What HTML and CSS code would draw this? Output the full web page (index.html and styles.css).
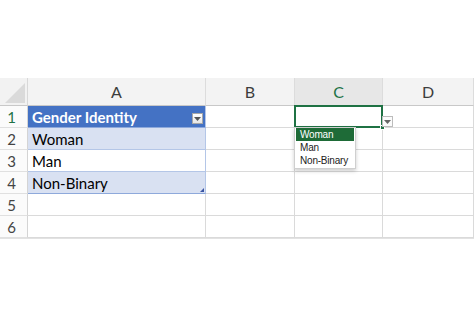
FILE: index.html
```html
<!DOCTYPE html>
<html>
<head>
<meta charset="utf-8">
<link rel="stylesheet" href="styles.css">
</head>
<body>
<div class="page">
  <div class="sheet">
    <div class="corner"><svg class="corner-tri" width="28" height="28" viewBox="0 0 28 28"><polygon points="5,25 25,25 25,5" fill="#dadada"/></svg></div>
    <div class="colhead">A</div>
    <div class="colhead">B</div>
    <div class="colhead active">C</div>
    <div class="colhead">D</div>

    <div class="rowhead active">1</div>
    <div class="cell t-head">Gender Identity<span class="filter"><svg width="7" height="4" viewBox="0 0 7 4"><polygon points="0,0 7,0 3.5,4" fill="#555"/></svg></span></div>
    <div class="cell"></div>
    <div class="cell sel">
      <span class="sel-handle"></span>
      <span class="dd-btn"><svg width="7" height="4" viewBox="0 0 7 4"><polygon points="0,0 7,0 3.5,4" fill="#666"/></svg></span>
      <div class="dd-list">
        <div class="dd-item on">Woman</div>
        <div class="dd-item">Man</div>
        <div class="dd-item">Non-Binary</div>
      </div>
    </div>
    <div class="cell"></div>

    <div class="rowhead">2</div>
    <div class="cell t-band">Woman</div>
    <div class="cell"></div>
    <div class="cell"></div>
    <div class="cell"></div>

    <div class="rowhead">3</div>
    <div class="cell t-plain">Man</div>
    <div class="cell"></div>
    <div class="cell"></div>
    <div class="cell"></div>

    <div class="rowhead">4</div>
    <div class="cell t-band t-last">Non-Binary<span class="resize"></span></div>
    <div class="cell"></div>
    <div class="cell"></div>
    <div class="cell"></div>

    <div class="rowhead">5</div>
    <div class="cell"></div>
    <div class="cell"></div>
    <div class="cell"></div>
    <div class="cell"></div>

    <div class="rowhead">6</div>
    <div class="cell"></div>
    <div class="cell"></div>
    <div class="cell"></div>
    <div class="cell"></div>
  </div>
</div>
</body>
</html>
```

FILE: styles.css
```css
* { box-sizing: border-box; }
html, body { margin: 0; padding: 0; background: #ffffff; }
body { width: 474px; height: 315px; overflow: hidden; font-family: Lato, "Open Sans", "Liberation Sans", sans-serif; }

.page { padding-top: 78px; }

.sheet {
  display: grid;
  grid-template-columns: 28px 178px 89px 88px 91px;
  grid-template-rows: 28px repeat(6, 22px);
  width: 474px;
  border-bottom: 1px solid #e2e2e2;
}

.corner {
  background: #f2f2f2;
  border-right: 1px solid #d8d8d8;
  border-bottom: 1px solid #c8c8c8;
  position: relative;
}
.corner-tri { display: block; }

.colhead {
  background: #f3f3f3;
  border-right: 1px solid #dcdcdc;
  border-bottom: 1px solid #c8c8c8;
  display: flex;
  align-items: center;
  justify-content: center;
  font-size: 16px;
  color: #3d3d3d;
}
.colhead.active { background: #e7e7e7; color: #217346; }

.rowhead {
  background: #fbfbfb;
  border-right: 1px solid #d4d4d4;
  border-bottom: 1px solid #e0e0e0;
  display: flex;
  align-items: center;
  justify-content: center;
  font-size: 15px;
  color: #444;
  padding-right: 4px;
}
.rowhead.active { color: #217346; }

.cell {
  border-right: 1px solid #dadada;
  border-bottom: 1px solid #dadada;
  display: flex;
  align-items: center;
  padding-left: 4px;
  font-size: 15px;
  color: #000;
  position: relative;
}

.t-head {
  background: #4472c4;
  color: #fff;
  font-weight: bold;
  border-right: 1px solid #b4c6e7;
  border-bottom: 1px solid #8ea9db;
}
.t-band {
  background: #d9e1f2;
  border-right: 1px solid #b4c6e7;
  border-bottom: 1px solid #b4c6e7;
}
.t-plain {
  background: #ffffff;
  border-right: 1px solid #b4c6e7;
  border-bottom: 1px solid #b4c6e7;
}
.t-last { border-bottom: 1px solid #8ea9db; }

.filter {
  position: absolute;
  right: 2px;
  top: 7px;
  width: 11px;
  height: 11px;
  background: linear-gradient(#ffffff, #e6e6e6);
  border: 1px solid #a8a8a8;
  display: flex;
  align-items: center;
  justify-content: center;
}

.resize {
  position: absolute;
  right: 1px;
  bottom: 1px;
  width: 0;
  height: 0;
  border-left: 4px solid transparent;
  border-bottom: 4px solid #3a55a4;
}

.sel {
  border: 2px solid #1f7244;
  margin: -1px 0 0 -1px;
  width: calc(100% + 1px);
  height: calc(100% + 1px);
  z-index: 2;
}
.sel-handle {
  position: absolute;
  right: -4px;
  bottom: -4px;
  width: 5px;
  height: 5px;
  background: #1f7244;
  border: 1px solid #fff;
}

.dd-btn {
  position: absolute;
  left: calc(100% + 1px);
  top: 9px;
  width: 11px;
  height: 11px;
  background: #fbfbfb;
  border: 1px solid #bcbcbc;
  display: flex;
  align-items: center;
  justify-content: center;
}

.dd-list {
  position: absolute;
  left: -2px;
  top: calc(100% + 1px);
  width: 62px;
  background: #fff;
  border: 1px solid #cfcfcf;
  box-shadow: 0 2px 4px rgba(0,0,0,0.2);
  padding: 0 0 1px 0;
  z-index: 3;
}
.dd-item {
  font-family: "Liberation Sans", Arial, sans-serif;
  font-size: 10px;
  line-height: 13px;
  letter-spacing: -0.2px;
  color: #222;
  padding-left: 5px;
  white-space: nowrap;
}
.dd-item.on { background: #1e6b37; color: #fff; margin: 0 1px; padding-left: 4px; }
```
